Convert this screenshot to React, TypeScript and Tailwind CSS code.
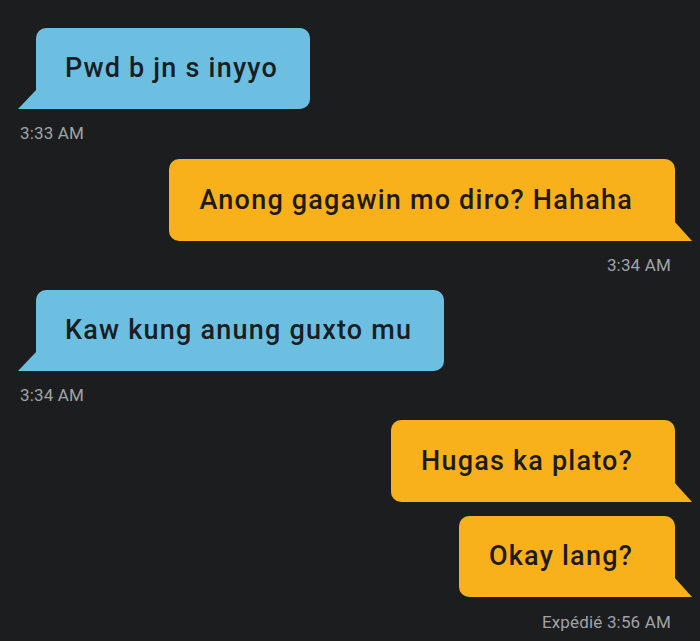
import React from 'react';

type Side = 'left' | 'right';

interface BubbleProps {
  side: Side;
  text: string;
  className?: string;
}

function Bubble({ side, text, className = '' }: BubbleProps) {
  if (side === 'left') {
    return (
      <div className={`relative self-start ml-[16px] ${className}`}>
        <div className="flex items-center h-full bg-[#6dbfe1] rounded-[10px] rounded-bl-none pl-[29px] pr-[32px] text-[27px] font-medium tracking-[0.045em] text-[#1a1e23] whitespace-nowrap">
          {text}
        </div>
        {/* tail */}
        <svg className="absolute bottom-0 -left-[18px]" width="19" height="20" viewBox="0 0 19 20">
          <polygon points="19,0 0,20 19,20" fill="#6dbfe1" />
        </svg>
      </div>
    );
  }
  return (
    <div className={`relative self-end ${className}`}>
      <div className="flex items-center h-full bg-[#f9b11b] rounded-[10px] rounded-br-none pl-[30px] pr-[42px] text-[27px] font-medium tracking-[0.045em] text-[#1d1b17] whitespace-nowrap">
        {text}
      </div>
      <svg className="absolute bottom-0 -right-[17px]" width="18" height="20" viewBox="0 0 18 20">
        <polygon points="0,0 18,20 0,20" fill="#f9b11b" />
      </svg>
    </div>
  );
}

function Stamp({ side, text, className = '' }: { side: Side; text: string; className?: string }) {
  return (
    <div
      className={`h-5 leading-5 text-[17px] tracking-[0.01em] text-[#a2a3a5] ${side === 'left' ? 'self-start' : 'self-end mr-[4px]'} ${className}`}
    >
      {text}
    </div>
  );
}

export default function App() {
  return (
    <div className="w-full h-[641px] bg-[#1c1d1f] flex flex-col pt-[28px] pl-[20px] pr-[25px] font-['Roboto',sans-serif] overflow-hidden">
      <Bubble side="left" text="Pwd b jn s inyyo" className="h-[81px]" />
      <Stamp side="left" text="3:33 AM" className="mt-[14px]" />

      <Bubble side="right" text="Anong gagawin mo diro? Hahaha" className="h-[82px] mt-[16px]" />
      <Stamp side="right" text="3:34 AM" className="mt-[14px]" />

      <Bubble side="left" text="Kaw kung anung guxto mu" className="h-[81px] mt-[15px]" />
      <Stamp side="left" text="3:34 AM" className="mt-[14px]" />

      <Bubble side="right" text="Hugas ka plato?" className="h-[82px] mt-[15px]" />
      <Bubble side="right" text="Okay lang?" className="h-[81px] mt-[14px]" />
      <Stamp side="right" text="Expédié 3:56 AM" className="mt-[15px]" />
    </div>
  );
}
